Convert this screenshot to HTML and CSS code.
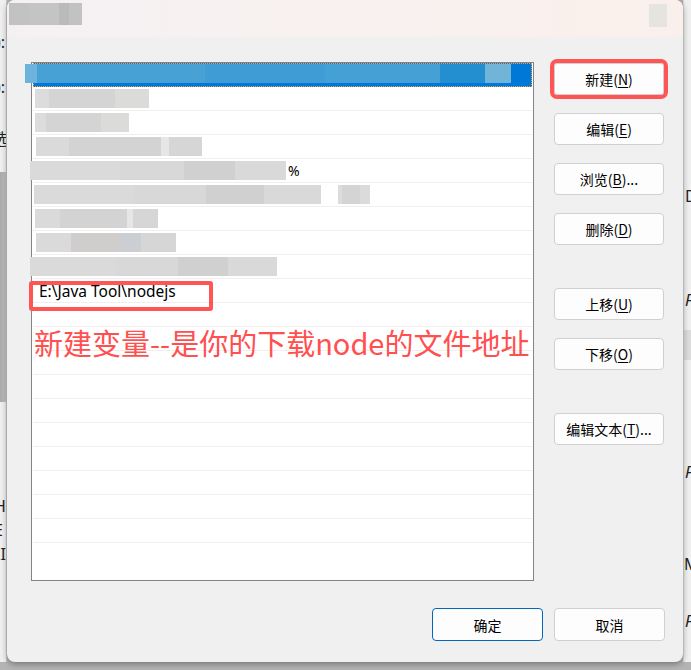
FILE: index.html
```
<!DOCTYPE html>
<html lang="zh-CN">
<head>
    <meta charset="UTF-8">
    <meta name="viewport" content="width=device-width, initial-scale=1.0">
    <title>编辑环境变量</title>
    <link rel="stylesheet" href="styles.css">
</head>
<body>
    <div class="desk">
        <div class="behind behind-left">
            <span class="frag f1">):</span>
            <span class="frag f2">):</span>
            <span class="frag f3">选</span>
            <div class="shade"></div>
            <span class="frag f4">H</span>
            <span class="frag f5">E</span>
            <span class="frag f6">LI</span>
        </div>

        <div class="dialog">
            <div class="titlebar">
                <div class="title-blur"></div>
                <div class="close-blur"></div>
            </div>

            <div class="content">
                <div class="main">
                    <div class="list">
                        <div class="row selected"><div class="sel-blur"></div></div>
                        <div class="row"><div class="blur" style="left:2px;width:114px"></div></div>
                        <div class="row"><div class="blur" style="left:2px;width:94px"></div></div>
                        <div class="row"><div class="blur b2" style="left:3px;width:166px"></div></div>
                        <div class="row"><div class="blur b3" style="left:-3px;width:256px"></div><span class="peek" style="left:255px">%</span></div>
                        <div class="row"><div class="blur b3" style="left:1px;width:287px"></div><div class="blur" style="left:305px;width:32px"></div></div>
                        <div class="row"><div class="blur b2" style="left:2px;width:123px"></div></div>
                        <div class="row"><div class="blur b4" style="left:3px;width:140px"></div></div>
                        <div class="row"><div class="blur b3" style="left:-3px;width:247px"></div></div>
                        <div class="row">
                            <span class="path">E:\Java Tool\nodejs</span>
                            <div class="mark-box"></div>
                        </div>
                        <div class="row"></div>
                        <div class="row"></div>
                        <div class="row"></div>
                        <div class="row"></div>
                        <div class="row"></div>
                        <div class="row"></div>
                        <div class="row"></div>
                        <div class="row"></div>
                        <div class="row"></div>
                        <div class="row"></div>
                        <div class="row last"></div>

                        <div class="note">新建变量--是你的下载node的文件地址</div>
                    </div>

                    <div class="side">
                        <button class="btn marked">新建(<u>N</u>)</button>
                        <button class="btn">编辑(<u>E</u>)</button>
                        <button class="btn">浏览(<u>B</u>)...</button>
                        <button class="btn">删除(<u>D</u>)</button>
                        <button class="btn spaced">上移(<u>U</u>)</button>
                        <button class="btn">下移(<u>O</u>)</button>
                        <button class="btn spaced">编辑文本(<u>T</u>)...</button>
                    </div>
                </div>

                <div class="footer">
                    <button class="btn default">确定</button>
                    <button class="btn">取消</button>
                </div>
            </div>
        </div>

        <div class="behind behind-right">
            <span class="frag r1">D</span>
            <span class="frag r2">F</span>
            <span class="frag r3">F</span>
            <span class="frag r4">M</span>
            <span class="frag r5">F</span>
        </div>
    </div>
</body>
</html>
```

FILE: styles.css
```
* {
    margin: 0;
    padding: 0;
    box-sizing: border-box;
}

body {
    font-family: "Noto Sans", "Noto Sans CJK SC", sans-serif;
    background: #b4b4b4;
    width: 691px;
    height: 670px;
    overflow: hidden;
}

.desk {
    display: flex;
    height: 670px;
}

/* windows peeking out behind the dialog */
.behind {
    position: relative;
    height: 662px;
    background: #f0f0f0;
    overflow: hidden;
    font-size: 16px;
    color: #222;
}

.behind-left {
    width: 7px;
    border-right: 1px solid #c8c8c8;
}

.behind-right {
    width: 8px;
    border-left: 1px solid #d8d8d8;
    background: linear-gradient(#f0f0f0 0, #f0f0f0 330px, #dcdcdc 330px, #dcdcdc 360px, #f0f0f0 360px);
}

.shade {
    position: absolute;
    left: 0;
    top: 172px;
    width: 7px;
    height: 230px;
    background: linear-gradient(90deg, #aaa, #c8c8c8);
}

.frag {
    position: absolute;
    line-height: 1;
}

.f1 { top: 34px; left: -4px; }
.f2 { top: 79px; left: -4px; }
.f3 { top: 131px; left: -8px; }
.f4 { top: 498px; left: -6px; }
.f5 { top: 522px; left: -6px; }
.f6 { top: 546px; left: -8px; }
.r1 { top: 188px; left: 1px; }
.r2 { top: 292px; left: 1px; font-style: italic; }
.r3 { top: 464px; left: 1px; font-style: italic; }
.r4 { top: 556px; left: 0; }
.r5 { top: 613px; left: 1px; font-style: italic; }

/* dialog */
.dialog {
    width: 676px;
    height: 662px;
    background: #f0f0f0;
    border-radius: 8px;
    box-shadow: 0 2px 6px rgba(0, 0, 0, 0.35);
    overflow: hidden;
    position: relative;
    z-index: 1;
}

.titlebar {
    height: 37px;
    background: linear-gradient(90deg, #f5f1f3, #faf0eb);
    display: flex;
    justify-content: space-between;
    align-items: flex-start;
    padding: 3px 16px 0 2px;
}

.title-blur {
    width: 73px;
    height: 22px;
    background: linear-gradient(90deg, #c2c2c2 0, #c2c2c2 20px, #c4c4c4 20px, #c4c4c4 50px, #bababa 50px, #bababa 60px, #c2c2c2 60px);
}

.close-blur {
    width: 18px;
    height: 23px;
    margin-top: 1px;
    background: #e6e4de;
}

.content {
    padding: 25px 18px 21px 24px;
}

.main {
    display: flex;
    gap: 20px;
}

/* list box */
.list {
    position: relative;
    width: 503px;
    height: 519px;
    background: #fff;
    border: 1px solid #83838c;
    padding: 0 1px;
}

.row {
    position: relative;
    height: 24px;
    border-bottom: 1px solid #efefef;
}

.row.last {
    border-bottom: none;
}

.row.selected {
    background: #0078d7;
    border-bottom: none;
    outline: 1px dotted #f0a040;
    outline-offset: -1px;
}

.sel-blur {
    position: absolute;
    left: -8px;
    top: 1px;
    width: 486px;
    height: 19px;
    background: linear-gradient(90deg, #6cb4dc 0, #6cb4dc 12px, #47a1d5 12px, #47a1d5 180px, #3f9cd4 180px, #3f9cd4 300px, #45a0d5 300px, #45a0d5 415px, #238fd0 415px, #238fd0 460px, #70b4d8 460px);
}

.blur {
    position: absolute;
    top: 2px;
    height: 19px;
    background: linear-gradient(90deg, #dcdcdc 0, #dcdcdc 12%, #d4d4d4 12%, #d4d4d4 70%, #dbdbda 70%);
}

.blur.b2 {
    background: linear-gradient(90deg, #dadada 0, #dadada 20%, #d3d3d3 20%, #d3d3d3 75%, #e6e6e6 75%, #e6e6e6 80%, #d6d6d6 80%);
}

.blur.b3 {
    background: linear-gradient(90deg, #dadada 0, #dadada 35%, #d8d8d8 35%, #d8d8d8 60%, #d0d0d0 60%, #d0d0d0 80%, #d9d9d9 80%);
}

.blur.b4 {
    background: linear-gradient(90deg, #dadada 0, #dadada 25%, #cfcecc 25%, #cfcecc 60%, #cbced2 60%, #cbced2 75%, #d6d6d6 75%);
}

.peek {
    position: absolute;
    top: 2px;
    font-size: 14px;
    color: #000;
}

.path {
    display: block;
    padding: 3px 0 0 6px;
    font-size: 15.5px;
    line-height: 18px;
    color: #000;
}

.mark-box {
    position: absolute;
    left: -4px;
    top: 2px;
    width: 184px;
    height: 30px;
    border: 4px solid #ff5555;
    border-radius: 3px;
}

.note {
    position: absolute;
    left: 2px;
    top: 263px;
    font-family: "Noto Sans CJK SC", sans-serif;
    font-size: 29px;
    line-height: 32px;
    color: #ff4f4f;
    white-space: nowrap;
}

/* buttons */
.side {
    width: 110px;
    display: flex;
    flex-direction: column;
    gap: 18px;
    padding-top: 1px;
}

.btn {
    height: 32px;
    width: 110px;
    background: #fdfdfd;
    border: 1px solid #d0d0d0;
    border-radius: 4px;
    font-family: "Noto Sans CJK SC", sans-serif;
    font-size: 14px;
    color: #000;
}

.btn u {
    text-underline-offset: 2px;
}

.btn.marked {
    outline: 4px solid #ff5555;
    outline-offset: 0;
    border-radius: 3px;
}

.btn.spaced {
    margin-top: 25px;
}

.footer {
    margin-top: 27px;
    display: flex;
    justify-content: flex-end;
    gap: 11px;
}

.footer .btn {
    width: 111px;
    height: 33px;
}

.btn.default {
    border: 1px solid #0067c0;
}
```
